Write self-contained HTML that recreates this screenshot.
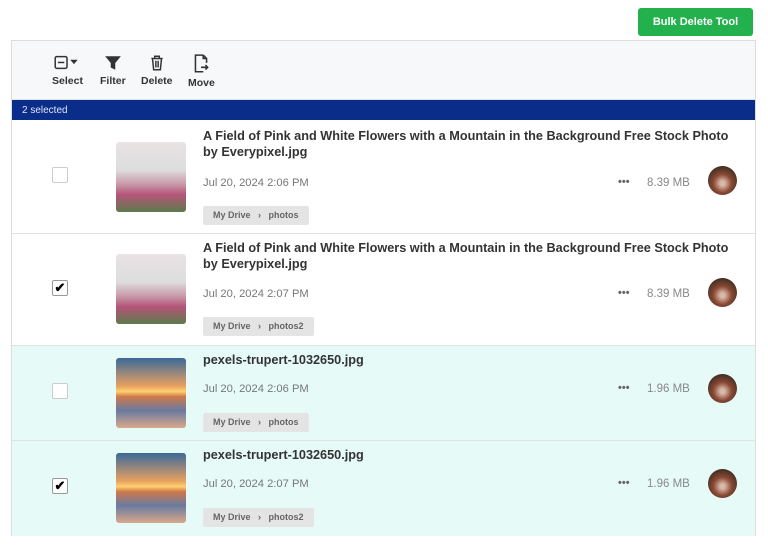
<!DOCTYPE html><html><head><style>
*{box-sizing:border-box;margin:0;padding:0}
body{width:768px;height:546px;background:#fff;font-family:"Liberation Sans",sans-serif;position:relative;overflow:hidden}
.btn{position:absolute;left:638px;top:8px;width:115px;height:28px;background:#22b14c;color:#fff;border-radius:3px;font-size:11px;font-weight:bold;text-align:center;line-height:28px}
.box{position:absolute;left:11px;top:40px;width:745px;height:496px;border:1px solid #ddd}
.tb{height:59px;background:#f7f8fa;border-bottom:1px solid #e2e2e2;position:relative}
.ti{position:absolute;top:13px;text-align:center;font-size:10.5px;font-weight:bold;color:#333}
.ti svg{display:block;margin:0 auto 3px}
.sel{height:20px;background:#0b2d8a;color:#dfe6ff;font-size:10px;line-height:21px;padding-left:10px}
.row{position:absolute;left:0;width:743px;border-bottom:1px solid #e2e2e2}
.cb{position:absolute;left:40px;width:16px;height:16px;border:1px solid #ccc;border-radius:2px;background:#fff}
.th{position:absolute;left:104px;width:70px;height:70px;border-radius:3px}
.ti2{position:absolute;left:191px;font-size:12.7px;font-weight:bold;color:#333;line-height:16px;width:535px}
.dt{position:absolute;left:191px;font-size:11.2px;color:#777}
.bc{position:absolute;left:191px;height:19px;background:#e4e4e4;border-radius:2px;font-size:9px;font-weight:bold;color:#666;line-height:19px;padding:0 10px}
.dots{position:absolute;left:606px;font-size:11px;font-weight:bold;color:#666}
.sz{position:absolute;left:635px;font-size:11.5px;color:#888}
.av{position:absolute;left:696px;width:29px;height:29px;border-radius:50%;background:radial-gradient(circle at 50% 60%,#d9b8a8 10%,#8a4a35 40%,#3a2a20 80%)}
.fl{background:linear-gradient(#e9e3e4 0%,#ddd 40%,#c99aa9 60%,#b5557a 75%,#5d7a4a 100%)}
.sun{background:linear-gradient(#3a6a9a 0%,#e8a060 40%,#ffd070 48%,#d07a4a 55%,#6a7aa0 75%,#d9a98a 100%)}
</style></head><body>
<div class="btn">Bulk Delete Tool</div>
<div class="box">
<div class="tb">
<div class="ti" style="left:40px"><svg width="30" height="18" viewBox="0 0 28 16"><rect x="3" y="2" width="11" height="11" rx="1.5" fill="none" stroke="#333" stroke-width="1.4"/><line x1="5.5" y1="7.5" x2="11.5" y2="7.5" stroke="#333" stroke-width="1.4"/><path d="M17 5h7l-3.5 4z" fill="#333"/></svg>Select</div>
<div class="ti" style="left:88px"><svg width="18" height="18" viewBox="0 0 16 16"><path d="M1 2h14l-5 6v6l-4-2V8z" fill="#333"/></svg>Filter</div>
<div class="ti" style="left:129px"><svg width="18" height="18" viewBox="0 0 16 16"><path d="M3 4h10M6 4V2h4v2M4 4l1 10h6l1-10M7 6v6M9 6v6" fill="none" stroke="#333" stroke-width="1.3"/></svg>Delete</div>
<div class="ti" style="left:176px"><svg width="18" height="20" viewBox="0 0 16 18"><path d="M10 1H3v15h7M10 1l3 3v4M10 1v3h3M8 12h6M12 10l2 2-2 2" fill="none" stroke="#333" stroke-width="1.4"/></svg>Move</div>
</div>
<div class="sel">2 selected</div>
<div class="row" style="top:79px;height:114px"><div class="cb" style="top:47px"></div><div class="th fl" style="top:22px"></div><div class="ti2" style="top:8px">A Field of Pink and White Flowers with a Mountain in the Background Free Stock Photo by Everypixel.jpg</div><div class="dt" style="top:57px">Jul 20, 2024 2:06 PM</div><div class="bc" style="top:86px">My Drive &nbsp;&nbsp;› &nbsp;&nbsp;photos</div><div class="dots" style="top:56px">•••</div><div class="sz" style="top:57px">8.39 MB</div><div class="av" style="top:46px"></div></div>
<div class="row" style="top:193px;height:112px"><div class="cb" style="top:46px;border-color:#999;text-align:center;font-size:13px;line-height:14px;font-weight:bold">✔</div><div class="th fl" style="top:20px"></div><div class="ti2" style="top:6px">A Field of Pink and White Flowers with a Mountain in the Background Free Stock Photo by Everypixel.jpg</div><div class="dt" style="top:54px">Jul 20, 2024 2:07 PM</div><div class="bc" style="top:83px">My Drive &nbsp;&nbsp;› &nbsp;&nbsp;photos2</div><div class="dots" style="top:53px">•••</div><div class="sz" style="top:54px">8.39 MB</div><div class="av" style="top:44px"></div></div>
<div class="row" style="top:305px;height:95px;background:#e6fbf8"><div class="cb" style="top:37px"></div><div class="th sun" style="top:12px"></div><div class="ti2" style="top:6px">pexels-trupert-1032650.jpg</div><div class="dt" style="top:37px">Jul 20, 2024 2:06 PM</div><div class="bc" style="top:67px">My Drive &nbsp;&nbsp;› &nbsp;&nbsp;photos</div><div class="dots" style="top:36px">•••</div><div class="sz" style="top:37px">1.96 MB</div><div class="av" style="top:28px"></div></div>
<div class="row" style="top:400px;height:95px;background:#e6fbf8;border-bottom:none"><div class="cb" style="top:37px;border-color:#999;text-align:center;font-size:13px;line-height:14px;font-weight:bold">✔</div><div class="th sun" style="top:12px"></div><div class="ti2" style="top:6px">pexels-trupert-1032650.jpg</div><div class="dt" style="top:37px">Jul 20, 2024 2:07 PM</div><div class="bc" style="top:67px">My Drive &nbsp;&nbsp;› &nbsp;&nbsp;photos2</div><div class="dots" style="top:36px">•••</div><div class="sz" style="top:37px">1.96 MB</div><div class="av" style="top:28px"></div></div>
</div>
</body></html>
